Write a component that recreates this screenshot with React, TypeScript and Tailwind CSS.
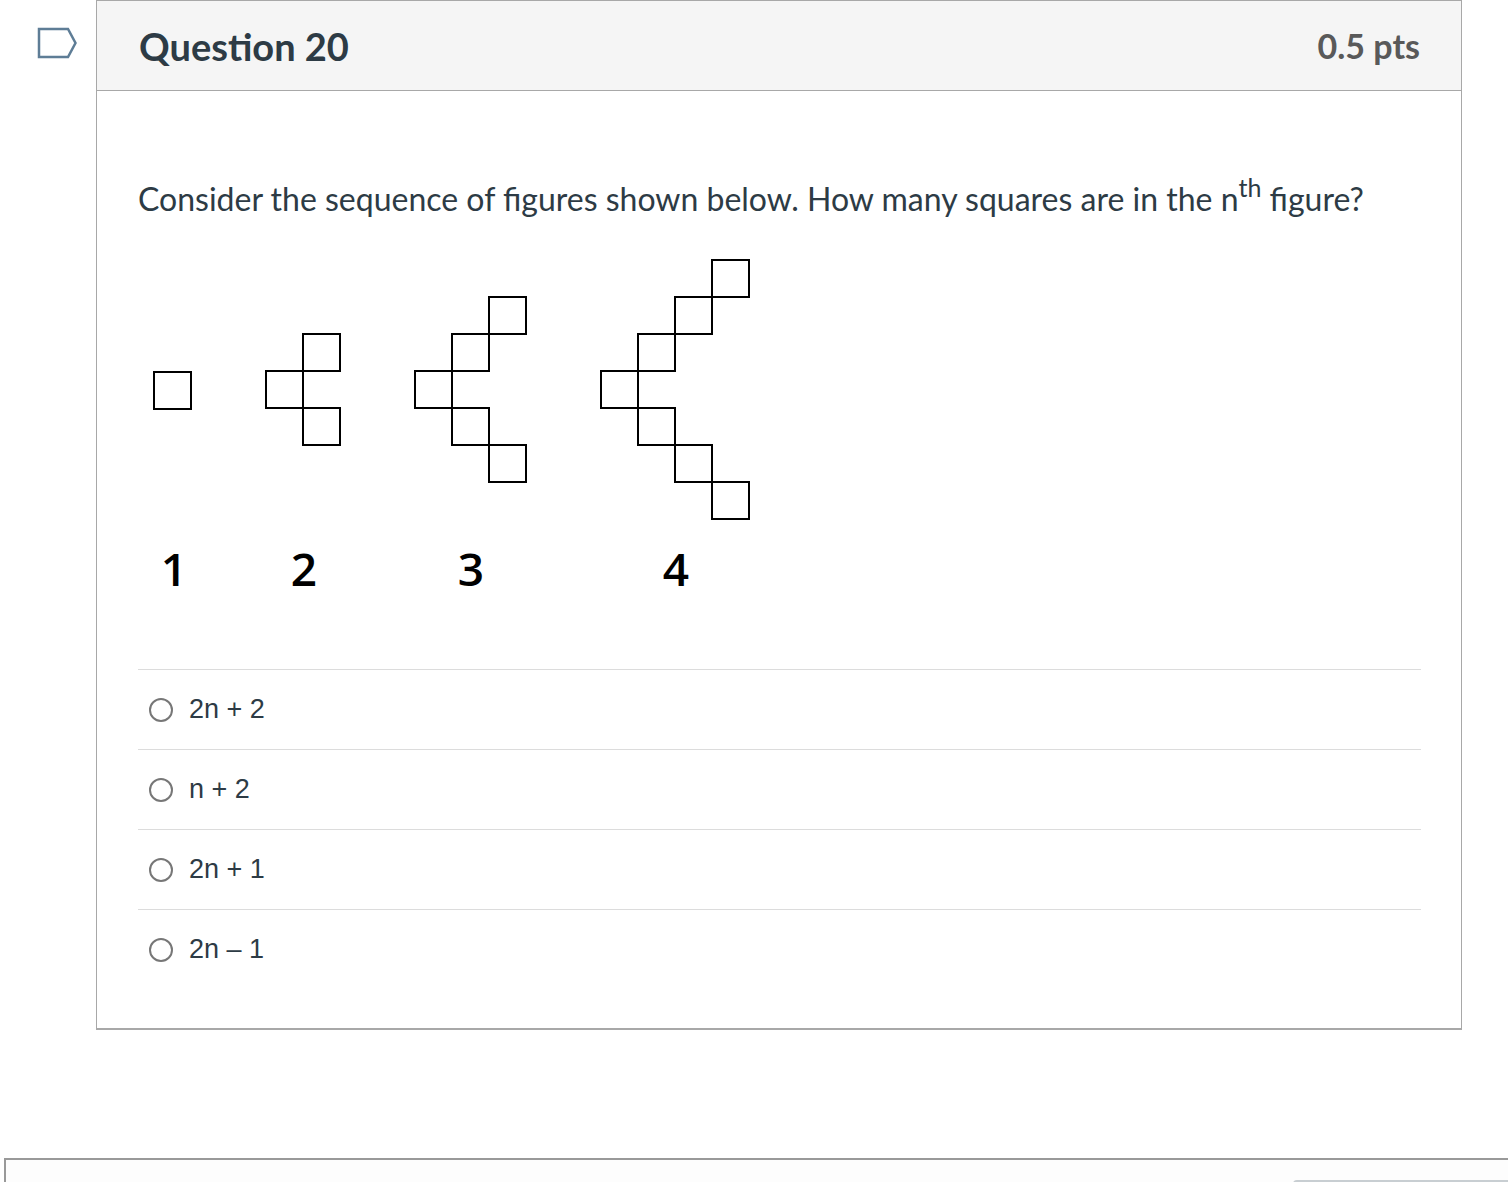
import React from "react";

const squares: [number, number][] = [
  [16, 122],
  [165, 84],
  [128, 121],
  [165, 158],
  [351, 47],
  [314, 84],
  [277, 121],
  [314, 158],
  [351, 195],
  [574, 10],
  [537, 47],
  [500, 84],
  [463, 121],
  [500, 158],
  [537, 195],
  [574, 232],
];

const labels: [string, number][] = [
  ["1", 36],
  ["2", 166],
  ["3", 333],
  ["4", 538],
];

const answers = ["2n + 2", "n + 2", "2n + 1", "2n \u2013 1"];

function Figure() {
  return (
    <svg width="620" height="360" viewBox="0 0 620 360" className="block">
      {squares.map(([x, y], i) => (
        <rect
          key={i}
          x={x}
          y={y}
          width={37}
          height={37}
          fill="none"
          stroke="#000"
          strokeWidth={2}
        />
      ))}
      {labels.map(([t, x]) => (
        <text
          key={t}
          x={x}
          y={336}
          textAnchor="middle"
          fontFamily="'Open Sans', 'Liberation Sans', sans-serif"
          fontWeight={600}
          fontSize={46}
          fill="#000"
        >
          {t}
        </text>
      ))}
    </svg>
  );
}

export default function App() {
  return (
    <div className="min-h-[1182px] bg-white overflow-hidden" style={{ fontFamily: "Lato, 'Liberation Sans', sans-serif" }}>
      <div className="flex">
        <div className="w-[96px] shrink-0 pt-[27px] pl-[37px]">
          <svg width="42" height="34" viewBox="0 0 42 34">
            <path
              d="M2 2 H31 L38.5 16 L31 30 H2 Z"
              fill="none"
              stroke="#5e7d96"
              strokeWidth={2.5}
              strokeLinejoin="miter"
            />
          </svg>
        </div>
        <div className="w-[1366px] shrink-0 border border-b-2 border-[#a8a8a8]">
          <div className="h-[90px] bg-[#f5f5f5] border-b border-[#a8a8a8] flex items-center justify-between pl-[42px] pr-[41px]">
            <div className="text-[38px] font-bold text-[#2d3b45] leading-none">Question 20</div>
            <div className="text-[34px] font-bold text-[#595959] leading-none">0.5 pts</div>
          </div>
          <div className="pl-[41px] pr-[40px] pt-[88px] pb-[39px]">
            <p className="text-[32px] leading-[40px] text-[#2d3b45] whitespace-nowrap">
              Consider the sequence of figures shown below. How many squares are in the n
              <sup className="text-[25px] top-[-0.55em]">th</sup> figure?
            </p>
            <div className="mt-[31px]">
              <Figure />
            </div>
            <div className="mt-[59px]">
              {answers.map((a) => (
                <div key={a} className="h-[80px] border-t border-[#dcdcdc] flex items-center pl-[11px]">
                  <span className="w-[24px] h-[24px] rounded-full border-2 border-[#777] shrink-0" />
                  <span
                    className="ml-[16px] text-[27px] text-[#2d3b45]"
                    style={{ fontFamily: "'Liberation Sans', Arial, sans-serif" }}
                  >
                    {a}
                  </span>
                </div>
              ))}
            </div>
          </div>
        </div>
      </div>
      <div className="mt-[128px] ml-[4px] h-[60px] border-t-2 border-l-2 border-[#999] bg-[#fdfdfd] flex justify-end">
        <div className="mt-[20px] w-[215px] h-[20px] bg-[#c8ced2] rounded-tl-[4px]" />
      </div>
    </div>
  );
}
